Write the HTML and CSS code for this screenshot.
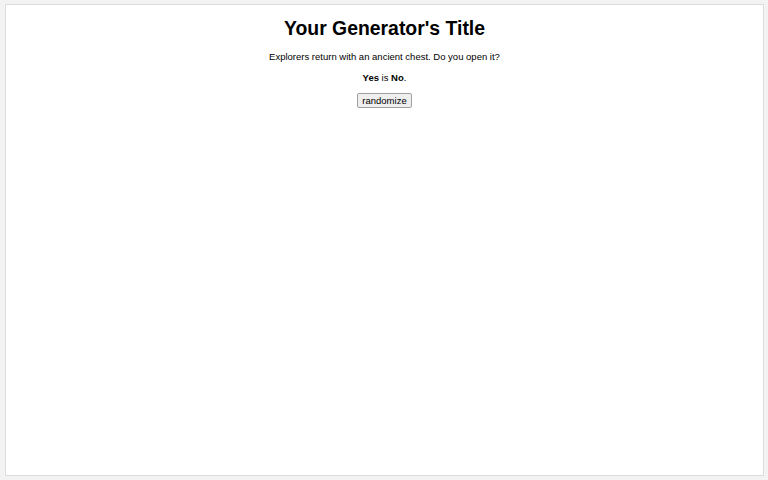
FILE: index.html
```html
<!DOCTYPE html>
<html>
<head>
<meta charset="utf-8">
<link rel="stylesheet" href="styles.css">
</head>
<body>
<div class="page">
  <h1 class="title">Your Generator's Title</h1>
  <p class="line">Explorers return with an ancient chest. Do you open it?</p>
  <p class="line last"><b>Yes</b> is <b>No</b>.</p>
  <button class="btn">randomize</button>
</div>
</body>
</html>
```
FILE: styles.css
```css
html, body { margin: 0; padding: 0; }
body {
  background: #f3f3f3;
  font-family: "Liberation Sans", Arial, sans-serif;
  padding: 4px 4px 4px 5px;
  height: 480px;
  box-sizing: border-box;
}
.page {
  background: #fff;
  border: 1px solid #dcdcdc;
  height: 100%;
  box-sizing: border-box;
  text-align: center;
  padding-top: 12px;
}
.title {
  font-size: 19.4px;
  line-height: 22px;
  font-weight: bold;
  margin: 0 0 12px;
  color: #000;
}
.line {
  font-size: 9.5px;
  line-height: 11px;
  margin: 0 0 10px;
  color: #000;
}
.line.last { margin-bottom: 7px; }
.btn {
  font-family: "Liberation Sans", Arial, sans-serif;
  font-size: 9.5px;
  line-height: 11px;
  padding: 1px 4px;
  background: #efefef;
  border: 1px solid #a0a0a0;
  border-radius: 2px;
  color: #000;
}
```
